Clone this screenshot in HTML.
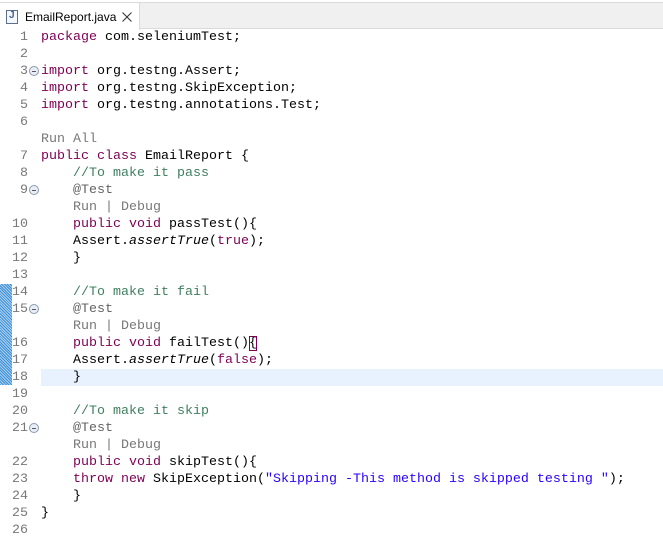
<!DOCTYPE html>
<html><head><style>
body{margin:0;width:663px;height:535px;overflow:hidden;background:#fff;font-family:"Liberation Mono",monospace;}
.bar{position:absolute;left:0;top:2px;width:663px;height:25px;background:#f0f0f0;border-top:1px solid #dadada;border-bottom:1px solid #dadada;}
.tab{position:absolute;left:0;top:2px;width:139px;height:27px;background:#fff;border-right:1px solid #dadada;border-top:1px solid #dadada;font-family:"Liberation Sans",sans-serif;font-size:12px;color:#000;}
.tab .t{position:absolute;left:25px;top:7px;}
.tab svg{position:absolute;left:122px;top:9px;}
.ico{position:absolute;left:6px;top:7px;width:10px;height:12px;border:1px solid #5a6f8e;background:#f4f7fb;}
.ico:after{content:"J";position:absolute;left:2px;top:-1px;font-size:10px;font-weight:bold;color:#4a5f8a;font-family:"Liberation Sans",sans-serif;}
.code{position:absolute;left:0;top:29px;width:663px;}
.r{position:relative;height:17px;line-height:17px;font-size:13.33px;white-space:pre;}
.n{position:absolute;left:0;width:28px;text-align:right;color:#787878;}
.c{position:absolute;left:41px;color:#000;}
.k{color:#7f0055;}
.cm{color:#3f7f5f;}
.an{color:#646464;}
.g{color:#787878;}
.s{color:#2a00ff;}
.i{font-style:italic;}
.fold{position:absolute;left:29px;top:3px;width:8px;height:8px;border:1px solid #8a9ab0;border-radius:50%;background:#e9eef5;}
.fold:after{content:"";position:absolute;left:2px;top:3.5px;width:4px;height:1px;background:#556;}
.blue{position:absolute;left:0;top:284px;width:12px;height:101px;background:repeating-linear-gradient(45deg,#3d8fd6 0 1px,#a9d0f0 1px 2px);}
</style></head><body>
<div class="bar"></div>
<div class="tab"><div class="ico"></div><span class="t">EmailReport.java</span><svg width="10" height="10" viewBox="0 0 10 10"><path d="M0.5 0.5L9.5 9.5M9.5 0.5L0.5 9.5" stroke="#333" stroke-width="1"/></svg></div>
<div class="code">
<div class="r"><span class="n">1</span><span class="c"><span class="k">package</span> com.seleniumTest;</span></div>
<div class="r"><span class="n">2</span></div>
<div class="r"><span class="n">3</span><span class="fold"></span><span class="c"><span class="k">import</span> org.testng.Assert;</span></div>
<div class="r"><span class="n">4</span><span class="c"><span class="k">import</span> org.testng.SkipException;</span></div>
<div class="r"><span class="n">5</span><span class="c"><span class="k">import</span> org.testng.annotations.Test;</span></div>
<div class="r"><span class="n">6</span></div>
<div class="r"><span class="c g">Run All</span></div>
<div class="r"><span class="n">7</span><span class="c"><span class="k">public</span> <span class="k">class</span> EmailReport {</span></div>
<div class="r"><span class="n">8</span><span class="c">    <span class="cm">//To make it pass</span></span></div>
<div class="r"><span class="n">9</span><span class="fold"></span><span class="c">    <span class="an">@Test</span></span></div>
<div class="r"><span class="c g">    Run | Debug</span></div>
<div class="r"><span class="n">10</span><span class="c">    <span class="k">public</span> <span class="k">void</span> passTest(){</span></div>
<div class="r"><span class="n">11</span><span class="c">    Assert.<span class="i">assertTrue</span>(<span class="k">true</span>);</span></div>
<div class="r"><span class="n">12</span><span class="c">    }</span></div>
<div class="r"><span class="n">13</span></div>
<div class="r"><span class="n">14</span><span class="c">    <span class="cm">//To make it fail</span></span></div>
<div class="r"><span class="n">15</span><span class="fold"></span><span class="c">    <span class="an">@Test</span></span></div>
<div class="r"><span class="c g">    Run | Debug</span></div>
<div class="r"><span class="n">16</span><span class="c">    <span class="k">public</span> <span class="k">void</span> failTest()<span style="outline:1px solid #7f0055;outline-offset:-1px">{</span></span></div>
<div class="r"><span class="n">17</span><span class="c">    Assert.<span class="i">assertTrue</span>(<span class="k">false</span>);</span></div>
<div class="r"><div style="position:absolute;left:41px;right:0;top:0;height:17px;background:#e8f2fe"></div><span class="n">18</span><span class="c">    }</span></div>
<div class="r"><span class="n">19</span></div>
<div class="r"><span class="n">20</span><span class="c">    <span class="cm">//To make it skip</span></span></div>
<div class="r"><span class="n">21</span><span class="fold"></span><span class="c">    <span class="an">@Test</span></span></div>
<div class="r"><span class="c g">    Run | Debug</span></div>
<div class="r"><span class="n">22</span><span class="c">    <span class="k">public</span> <span class="k">void</span> skipTest(){</span></div>
<div class="r"><span class="n">23</span><span class="c">    <span class="k">throw</span> <span class="k">new</span> SkipException(<span class="s">"Skipping -This method is skipped testing "</span>);</span></div>
<div class="r"><span class="n">24</span><span class="c">    }</span></div>
<div class="r"><span class="n">25</span><span class="c">}</span></div>
<div class="r"><span class="n">26</span></div>
</div>
<div class="blue"></div>
</body></html>
